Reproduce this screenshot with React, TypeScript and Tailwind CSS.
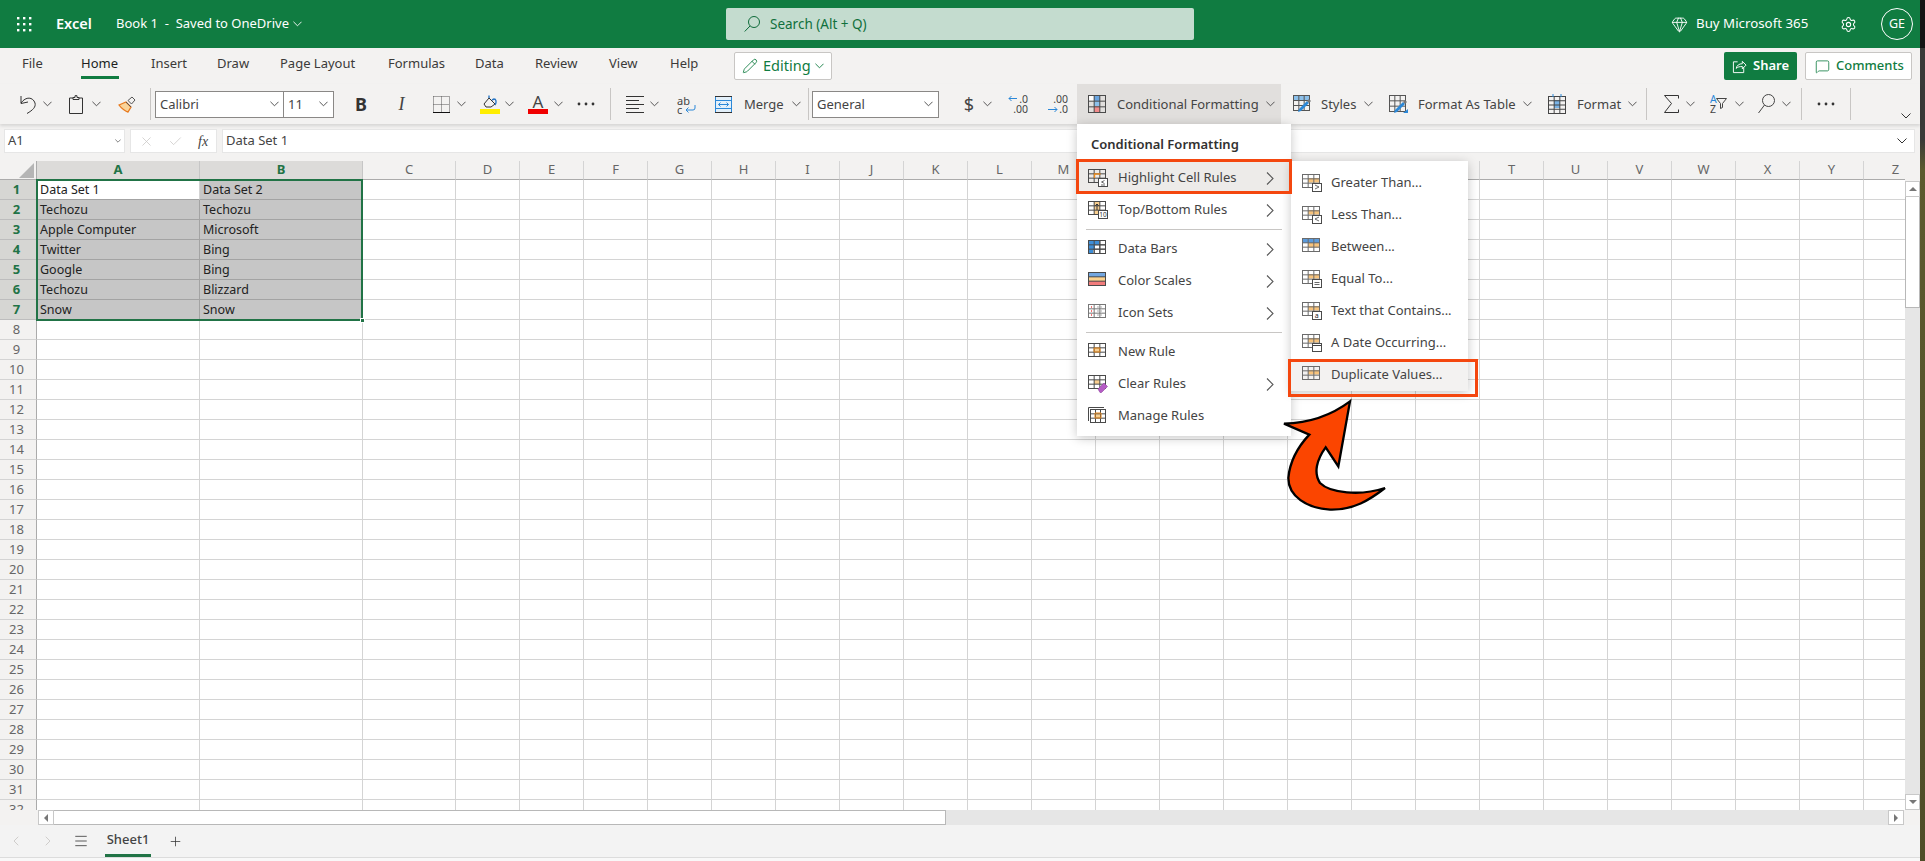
import { Gem, Pencil, Settings, MessageSquare, X, Check, Menu, Plus, ChevronLeft, ChevronRight } from 'lucide-react';
import type { ReactNode } from 'react';

const COLS = ['A','B','C','D','E','F','G','H','I','J','K','L','M','N','O','P','Q','R','S','T','U','V','W','X','Y','Z'];
const SHEET: Record<number, [string, string]> = {
  1: ['Data Set 1', 'Data Set 2'],
  2: ['Techozu', 'Techozu'],
  3: ['Apple Computer', 'Microsoft'],
  4: ['Twitter', 'Bing'],
  5: ['Google', 'Bing'],
  6: ['Techozu', 'Blizzard'],
  7: ['Snow', 'Snow'],
};
const ROWS = Array.from({ length: 32 }, (_, i) => i + 1);

function Chev({ className = '', color = '#444' }: { className?: string; color?: string }) {
  return (
    <svg viewBox="0 0 10 6" className={`w-[9px] h-[6px] shrink-0 ${className}`} fill="none" stroke={color} strokeWidth="1">
      <path d="M0.5 0.5 5 5l4.5-4.5" />
    </svg>
  );
}

function Sep({ className = '' }: { className?: string }) {
  return <div className={`w-px h-[32px] bg-[#c8c6c4] shrink-0 ${className}`} />;
}

function Dots({ className = '' }: { className?: string }) {
  return (
    <svg viewBox="0 0 18 4" className={`w-[18px] h-[4px] shrink-0 ${className}`} fill="#333">
      <circle cx="2" cy="2" r="1.4" /><circle cx="9" cy="2" r="1.4" /><circle cx="16" cy="2" r="1.4" />
    </svg>
  );
}

// small spreadsheet grid used by nearly all the format icons
function Tbl({ x = 0.5, y = 0.5, w = 17, h = 13, c = 3, r = 3, color = '#4a4a4a' }: { x?: number; y?: number; w?: number; h?: number; c?: number; r?: number; color?: string }) {
  const lines: ReactNode[] = [];
  for (let i = 1; i < c; i++) lines.push(<path key={`c${i}`} d={`M${x + (w * i) / c} ${y}v${h}`} />);
  for (let i = 1; i < r; i++) lines.push(<path key={`r${i}`} d={`M${x} ${y + (h * i) / r}h${w}`} />);
  return (
    <g fill="none" stroke={color} strokeWidth="1">
      <rect x={x} y={y} width={w} height={h} />
      {lines}
    </g>
  );
}

function Ico({ children, className = '' }: { children: ReactNode; className?: string }) {
  return <svg viewBox="0 0 20 18" className={`w-[20px] h-[18px] shrink-0 ${className}`}>{children}</svg>;
}

function SmallBox({ children }: { children?: ReactNode }) {
  return (
    <g>
      <rect x="10.5" y="9.5" width="9" height="8" fill="#fff" stroke="#4a4a4a" />
      {children}
    </g>
  );
}

const HighlightIcon = () => (
  <Ico><Tbl /><path d="M6.5 9V5h6" fill="none" stroke="#e8891c" strokeWidth="1.4" /><SmallBox><path d="M16.5 11.5l-3 1.5 3 1.5M13 16h4" fill="none" stroke="#444" strokeWidth=".8" /></SmallBox></Ico>
);
const TopBottomIcon = () => (
  <Ico><rect x="6" y="1" width="6" height="12" fill="#f9cf8f" /><Tbl /><path d="M9 9V3M7.3 4.7 9 3l1.7 1.7" fill="none" stroke="#333" /><SmallBox><text x="11.3" y="16" fontSize="6.5" fill="#333">10</text></SmallBox></Ico>
);
const DataBarsIcon = () => (
  <Ico><Tbl /><rect x="1" y="1" width="10" height="4" fill="#3f8fd8" /><rect x="1" y="5" width="6" height="4" fill="#3f8fd8" /><rect x="1" y="9" width="4" height="4" fill="#3f8fd8" /><Tbl /></Ico>
);
const ColorScalesIcon = () => (
  <Ico><rect x="1" y="1" width="16" height="4" fill="#74a7e0" /><rect x="1" y="5" width="16" height="4" fill="#fbd28f" /><rect x="1" y="9" width="16" height="4" fill="#f27c7c" /><Tbl c={1} /></Ico>
);
const IconSetsIcon = () => (
  <Ico><Tbl color="#777" /><path d="M3 3h1M3 7h1M3 11h1" stroke="#e44" strokeWidth="1.5" /><path d="M9 3h5M9 7h5M9 11h5" stroke="#aaa" /></Ico>
);
const NewRuleIcon = () => (
  <Ico><rect x="6" y="5" width="6" height="4" fill="#f9cf8f" /><Tbl /><path d="M6 5h6v4H6z" fill="none" stroke="#e8891c" /></Ico>
);
const ClearRulesIcon = () => (
  <Ico><rect x="6" y="5" width="6" height="4" fill="#f9cf8f" /><Tbl /><path d="M10 14l6-6 3.5 3.5-6 6H12z" fill="#b55cc4" stroke="#8d3f9e" strokeWidth=".6" /></Ico>
);
const ManageRulesIcon = () => (
  <Ico><rect x="7" y="6" width="6" height="5" fill="#f9cf8f" /><path d="M0.5 14V.5H16" fill="none" stroke="#4a4a4a" /><Tbl x={2.5} y={2.5} w={15} h={13} /><path d="M7 6h6v5H7z" fill="none" stroke="#e8891c" /></Ico>
);

function CondIcon({ symbol, blue = false }: { symbol?: ReactNode; blue?: boolean }) {
  return (
    <Ico>
      {blue && <rect x="1" y="1" width="16" height="4" fill="#5b9bdc" />}
      <rect x="6" y={blue ? 5 : 4} width="11" height="4.5" fill="#f7c37c" />
      <Tbl color="#6b6b6b" />
      {symbol && <SmallBox>{symbol}</SmallBox>}
    </Ico>
  );
}

const MainMenu: { label: string; icon: ReactNode; more?: boolean; sepAfter?: boolean; active?: boolean }[] = [
  { label: 'Highlight Cell Rules', icon: <HighlightIcon />, more: true, active: true },
  { label: 'Top/Bottom Rules', icon: <TopBottomIcon />, more: true, sepAfter: true },
  { label: 'Data Bars', icon: <DataBarsIcon />, more: true },
  { label: 'Color Scales', icon: <ColorScalesIcon />, more: true },
  { label: 'Icon Sets', icon: <IconSetsIcon />, more: true, sepAfter: true },
  { label: 'New Rule', icon: <NewRuleIcon /> },
  { label: 'Clear Rules', icon: <ClearRulesIcon />, more: true },
  { label: 'Manage Rules', icon: <ManageRulesIcon /> },
];

const SubMenu: { label: string; icon: ReactNode; hover?: boolean }[] = [
  { label: 'Greater Than...', icon: <CondIcon symbol={<path d="M13 11l4 2-4 2" fill="none" stroke="#444" strokeWidth=".8" />} /> },
  { label: 'Less Than...', icon: <CondIcon symbol={<path d="M17 11l-4 2 4 2" fill="none" stroke="#444" strokeWidth=".8" />} /> },
  { label: 'Between...', icon: <CondIcon blue /> },
  { label: 'Equal To...', icon: <CondIcon symbol={<path d="M12.5 12.5h5M12.5 14.5h5" stroke="#444" strokeWidth=".8" />} /> },
  { label: 'Text that Contains...', icon: <CondIcon symbol={<text x="12.7" y="16" fontSize="7" fill="#222">a</text>} /> },
  { label: 'A Date Occurring...', icon: <CondIcon symbol={<path d="M10.5 11.5h9" stroke="#444" />} /> },
  { label: 'Duplicate Values...', icon: <CondIcon />, hover: true },
];

function TopBar() {
  return (
    <div className="h-[48px] bg-[#107c41] flex items-center text-white shrink-0">
      <svg viewBox="0 0 16 16" className="w-[16px] h-[16px] ml-[16px] shrink-0" fill="#fff">
        {[1, 7, 13].map((y) => [1, 7, 13].map((x) => <rect key={`${x}${y}`} x={x} y={y} width="2.4" height="2.4" />))}
      </svg>
      <span className="ml-[24px] w-[36px] text-[14.5px] font-semibold">Excel</span>
      <span className="ml-[24px] w-[175px] text-[13px] whitespace-nowrap">Book 1&nbsp; -&nbsp; Saved to OneDrive</span>
      <Chev className="ml-[2px]" color="#fff" />
      <div className="ml-[424px] w-[468px] h-[32px] bg-[#c4dccf] rounded-[2px] flex items-center">
        <svg viewBox="0 0 16 16" className="w-[16px] h-[16px] ml-[18px] shrink-0" fill="none" stroke="#0f6b3a"><circle cx="10" cy="6" r="5.5" /><path d="M6 10 .7 15.5" /></svg>
        <span className="ml-[10px] text-[13.5px] text-[#10703c]">Search (Alt + Q)</span>
      </div>
      <Gem className="w-[17px] h-[17px] ml-[477px] shrink-0" strokeWidth={1.3} />
      <span className="ml-[8px] w-[111px] text-[13.3px] whitespace-nowrap">Buy Microsoft 365</span>
      <Settings className="w-[17px] h-[17px] ml-[33px] shrink-0" strokeWidth={1.5} />
      <div className="ml-[24px] w-[32px] h-[32px] rounded-full border border-white flex items-center justify-center text-[12.5px]">GE</div>
    </div>
  );
}

function TabsRow() {
  const tab = 'h-[24px] mt-[4px] flex items-center text-[13px] text-[#3b3a39] whitespace-nowrap shrink-0';
  return (
    <div className="h-[36px] bg-[#f3f2f1] flex items-start shrink-0">
      <span className={`${tab} ml-[22px] w-[22px]`}>File</span>
      <span className={`${tab} ml-[37px] w-[38px] !h-[27px] border-b-[3px] border-[#107c41] !text-[#201f1e]`}>Home</span>
      <span className={`${tab} ml-[32px] w-[34px]`}>Insert</span>
      <span className={`${tab} ml-[32px] w-[31px]`}>Draw</span>
      <span className={`${tab} ml-[32px] w-[75px]`}>Page Layout</span>
      <span className={`${tab} ml-[33px] w-[56px]`}>Formulas</span>
      <span className={`${tab} ml-[31px] w-[28px]`}>Data</span>
      <span className={`${tab} ml-[32px] w-[43px]`}>Review</span>
      <span className={`${tab} ml-[31px] w-[29px]`}>View</span>
      <span className={`${tab} ml-[32px] w-[29px]`}>Help</span>
      <div className="ml-[35px] mt-[4px] w-[98px] h-[28px] bg-white border border-[#c8c6c4] rounded-[2px] flex items-center text-[#107c41] text-[14.5px] shrink-0">
        <Pencil className="w-[16px] h-[16px] ml-[7px]" strokeWidth={1.3} />
        <span className="ml-[5px] w-[49px]">Editing</span>
        <Chev className="ml-[3px]" color="#107c41" />
      </div>
      <div className="ml-[892px] mt-[4px] w-[73px] h-[28px] bg-[#107c41] rounded-[2px] flex items-center text-white text-[13px] font-semibold shrink-0">
        <svg viewBox="0 0 16 16" className="w-[15px] h-[15px] ml-[8px]" fill="none" stroke="#fff" strokeWidth="1"><path d="M6 3H1.5v11.5h11V9" /><path d="M4.5 10c.5-3 3-5 6.5-5V2.5l4 4-4 4V8c-3 0-5 .5-6.5 2z" /></svg>
        <span className="ml-[6px]">Share</span>
      </div>
      <div className="ml-[8px] mt-[4px] w-[107px] h-[28px] bg-white border border-[#c8c6c4] rounded-[2px] flex items-center text-[#107c41] text-[13px] font-medium shrink-0">
        <MessageSquare className="w-[15px] h-[15px] ml-[9px]" strokeWidth={1.3} />
        <span className="ml-[6px]">Comments</span>
      </div>
    </div>
  );
}

function Toolbar() {
  const label = 'text-[13px] text-[#444] whitespace-nowrap shrink-0 pt-[2px]';
  return (
    <div className="h-[40px] bg-[#f3f2f1] flex items-center shrink-0 shadow-[0_2px_3px_rgba(0,0,0,0.12)] relative">
      <svg viewBox="0 0 17 19" className="w-[17px] h-[19px] ml-[20px] shrink-0" fill="none" stroke="#333"><path d="M1 1v7.5L8 7M1 8C6 1 13 2 15 8c1 4-2 7-8 10.5" /></svg>
      <Chev className="ml-[6px]" />
      <svg viewBox="0 0 14 19" className="w-[14px] h-[19px] ml-[17px] shrink-0" fill="none" stroke="#333"><path d="M4 3H.5v15.5h13V3H10" /><path d="M4 4.5V2.5h2V.7h2v1.8h2v2z" /></svg>
      <Chev className="ml-[9px]" />
      <svg viewBox="0 0 18 17" className="w-[18px] h-[17px] ml-[17px] shrink-0" fill="none"><path d="M1 9l7-3 5 5-3 5c-2-.5-7-4-9-7z" fill="#f9d49a" stroke="#e8791c" strokeWidth="1.3" /><path d="M8 6l5 5M10 4.5l3.5 3.5 3.5-4L14 1z" stroke="#555" /></svg>
      <Sep className="ml-[14px]" />
      <div className="ml-[4px] w-[129px] h-[27px] bg-white border border-[#8a8886] flex items-center shrink-0">
        <span className="ml-[4px] flex-1 text-[13px] text-[#444] pt-[1px]">Calibri</span>
        <Chev className="mr-[4px]" />
      </div>
      <div className="ml-[-1px] w-[51px] h-[27px] bg-white border border-[#8a8886] flex items-center shrink-0">
        <span className="ml-[4px] flex-1 text-[13px] text-[#444] pt-[1px]">11</span>
        <Chev className="mr-[5px]" />
      </div>
      <span className="ml-[21px] w-[12px] text-[18px] font-bold text-[#333] flex justify-center shrink-0">B</span>
      <span className="ml-[31px] w-[7px] text-[18px] italic text-[#444] font-['Liberation_Serif',serif] flex justify-center shrink-0">I</span>
      <svg viewBox="0 0 17 17" className="w-[17px] h-[17px] ml-[28px] shrink-0" fill="none" stroke="#555"><path d="M.5.5h16v16M.5.5v16M8.5.5v15M.5 8.5h16" strokeDasharray="1 1" /><path d="M0 16.5h17" stroke="#111" /></svg>
      <Chev className="ml-[7px]" />
      <svg viewBox="0 0 20 20" className="w-[20px] h-[20px] ml-[14px] shrink-0" fill="none"><path d="M4 10l5-6 6 6-4 3H6z" stroke="#333" /><path d="M9 4V1.5M15 11c2-3 1-6-1-6l-2 1" stroke="#2b78c5" strokeWidth="1.4" /><rect x="0" y="15" width="20" height="5" fill="#ffee00" /></svg>
      <Chev className="ml-[5px]" />
      <div className="ml-[14px] w-[20px] h-[20px] flex flex-col items-center shrink-0">
        <span className="text-[17px] leading-[15px] text-[#444]">A</span>
        <div className="w-[20px] h-[5px] bg-[#f00000]" />
      </div>
      <Chev className="ml-[6px]" />
      <Dots className="ml-[14px]" />
      <Sep className="ml-[15px]" />
      <svg viewBox="0 0 18 17" className="w-[18px] h-[17px] ml-[15px] shrink-0" stroke="#333"><path d="M0 .5h18M0 4.5h13M0 8.5h18M0 12.5h13M0 16.5h18" /></svg>
      <Chev className="ml-[6px]" />
      <div className="relative ml-[18px] w-[17px] h-[19px] flex flex-col text-[11px] leading-[9px] text-[#444] shrink-0 pt-[1px]">
        <span>ab</span>
        <span>c</span>
        <svg viewBox="0 0 11 9" className="absolute right-[-2px] bottom-[0px] w-[11px] h-[9px]" fill="none" stroke="#2b88d8"><path d="M10 0v3a2 2 0 0 1-2 2H1M3.5 2.5 1 5l2.5 2.5" /></svg>
      </div>
      <svg viewBox="0 0 17 17" className="w-[17px] h-[17px] ml-[21px] shrink-0" fill="none"><rect x=".5" y=".5" width="16" height="16" fill="#e3f0fa" stroke="#2b88d8" /><path d="M1 4.5h15M1 12.5h15" stroke="#2b88d8" /><path d="M0 .5h17M0 16.5h17" stroke="#333" /><path d="M3.5 8.5h10M5.5 6.5l-2 2 2 2M11.5 6.5l2 2-2 2" stroke="#2b88d8" /></svg>
      <span className={`${label} ml-[12px] w-[40px]`}>Merge</span>
      <Chev className="ml-[8px]" />
      <Sep className="ml-[7px]" />
      <div className="ml-[3px] w-[127px] h-[27px] bg-white border border-[#8a8886] flex items-center shrink-0">
        <span className="ml-[4px] flex-1 text-[13px] text-[#444] pt-[1px]">General</span>
        <Chev className="mr-[5px]" />
      </div>
      <span className="ml-[24px] w-[12px] text-[18px] text-[#444] flex justify-center shrink-0">$</span>
      <Chev className="ml-[8px]" />
      <div className="relative ml-[16px] w-[20px] h-[20px] flex flex-col items-end text-[10.5px] leading-[10px] text-[#444] shrink-0">
        <span>.0</span>
        <span>.00</span>
        <svg viewBox="0 0 9 7" className="absolute left-[0px] top-[1px] w-[9px] h-[7px]" fill="none" stroke="#2b88d8"><path d="M9 3.5H1M3.5 1 1 3.5 3.5 6" /></svg>
      </div>
      <div className="relative ml-[20px] w-[20px] h-[20px] flex flex-col items-end text-[10.5px] leading-[10px] text-[#444] shrink-0">
        <span>.00</span>
        <span>.0</span>
        <svg viewBox="0 0 10 7" className="absolute left-[0px] bottom-[1px] w-[10px] h-[7px]" fill="none" stroke="#2b88d8"><path d="M0 3.5h9M6.5 1 9 3.5 6.5 6" /></svg>
      </div>
      <div className="ml-[9px] w-[204px] h-[40px] bg-[#e1dfdd] flex items-center shrink-0">
        <svg viewBox="0 0 18 18" className="w-[18px] h-[18px] ml-[11px] shrink-0"><rect x="6" y="1" width="6" height="5" fill="#6aa5e0" /><rect x="6" y="6" width="6" height="5" fill="#8cc0ea" /><rect x="6" y="11" width="6" height="6" fill="#f28b8b" /><rect x="1" y="1" width="5" height="5" fill="#fff" /><Tbl x={.5} y={.5} w={17} h={17} /></svg>
        <span className={`${label} ml-[11px] w-[143px]`}>Conditional Formatting</span>
        <Chev className="ml-[6px]" />
      </div>
      <svg viewBox="0 0 19 19" className="w-[19px] h-[19px] ml-[12px] shrink-0"><rect x="1" y="1" width="15" height="5" fill="#8cc0ea" /><Tbl x={.5} y={.5} w={16} h={15} color="#555" /><path d="M5 17l3-1 8-8-2-2-8 8z" fill="#2b88d8" /><path d="M14 6l2-2 2 2-2 2z" fill="#777" /></svg>
      <span className={`${label} ml-[9px] w-[35px]`}>Styles</span>
      <Chev className="ml-[8px]" />
      <svg viewBox="0 0 19 19" className="w-[19px] h-[19px] ml-[16px] shrink-0"><Tbl x={.5} y={.5} w={16} h={16} color="#555" /><path d="M5 18l3-1 8-8-2-2-8 8z" fill="#2b88d8" /><path d="M14 7l2-2 2 2-2 2z" fill="#777" /><path d="M14 18h5v-4z" fill="#2b88d8" /></svg>
      <span className={`${label} ml-[10px] w-[98px]`}>Format As Table</span>
      <Chev className="ml-[7px]" />
      <svg viewBox="0 0 18 20" className="w-[18px] h-[20px] ml-[16px] shrink-0"><rect x="6" y="6" width="6" height="8" fill="#7ab3e6" /><Tbl x={.5} y={2.5} w={17} h={17} color="#444" c={3} r={4} /><path d="M5 0v3M13 0v3" stroke="#2b88d8" /></svg>
      <span className={`${label} ml-[11px] w-[44px]`}>Format</span>
      <Chev className="ml-[7px]" />
      <Sep className="ml-[9px]" />
      <svg viewBox="0 0 15 18" className="w-[15px] h-[18px] ml-[17px] shrink-0" fill="none" stroke="#333"><path d="M14.5 3.5V.5H.5l7 8-7 9h14v-3" /></svg>
      <Chev className="ml-[7px]" />
      <div className="relative ml-[15px] w-[17px] h-[20px] flex flex-col text-[10.5px] leading-[10px] shrink-0">
        <span className="text-[#2b88d8]">A</span>
        <span className="text-[#444]">Z</span>
        <svg viewBox="0 0 11 11" className="absolute right-[0px] top-[4px] w-[11px] h-[11px]" fill="none" stroke="#444"><path d="M.5.5h10l-4 5v4l-2 1V5.500z" /></svg>
      </div>
      <Chev className="ml-[8px]" />
      <svg viewBox="0 0 17 20" className="w-[17px] h-[20px] ml-[14px] shrink-0" fill="none" stroke="#444"><circle cx="10.5" cy="6.5" r="6" /><path d="M6.500 11 .5 19" /></svg>
      <Chev className="ml-[7px]" />
      <Sep className="ml-[10px]" />
      <Dots className="ml-[15px]" />
      <Sep className="ml-[15px]" />
      <Chev className="ml-[50px] self-end mb-[5px] !w-[10px]" color="#333" />
    </div>
  );
}

function FormulaBar() {
  return (
    <div className="h-[37px] bg-[#f3f2f1] flex items-start pt-[5px] shrink-0">
      <div className="ml-[4px] w-[121px] h-[24px] bg-white border border-[#e6e6e6] flex items-center shrink-0">
        <span className="ml-[3px] flex-1 text-[13px] text-[#444]">A1</span>
        <Chev className="mr-[3px] !w-[6px]" color="#333" />
      </div>
      <div className="ml-[5px] w-[87px] h-[24px] bg-white border border-[#e6e6e6] flex items-center shrink-0">
        <X className="w-[15px] h-[15px] ml-[8px] text-[#c8c6c4]" strokeWidth={1.2} />
        <Check className="w-[15px] h-[15px] ml-[14px] text-[#c8c6c4]" strokeWidth={1.2} />
        <span className="ml-[15px] text-[14px] italic text-[#444] font-['Liberation_Serif',serif]">fx</span>
      </div>
      <div className="ml-[5px] w-[1693px] h-[24px] bg-white border border-[#e6e6e6] flex items-center shrink-0">
        <span className="ml-[3px] flex-1 text-[13px] text-[#444]">Data Set 1</span>
        <Chev className="mr-[7px] !w-[10px]" color="#333" />
      </div>
    </div>
  );
}

function Grid() {
  return (
    <div className="relative w-[1905px] h-[649px] overflow-hidden shrink-0">
      <div className="grid grid-cols-[37px_163px_163px_93px_repeat(23,64px)] grid-rows-[19px_repeat(32,20px)]">
        <div className="bg-[#f3f2f1] border-b border-r border-[#ababab] relative">
          <svg viewBox="0 0 15 15" className="absolute right-[2px] bottom-[1px] w-[15px] h-[15px]"><path d="M15 0v15H0z" fill="#b5b5b5" /></svg>
        </div>
        {COLS.map((c, i) => (
          <div key={c} className={`border-b border-[#ababab] flex items-center justify-center text-[13px] border-r ${i < 2 ? 'bg-[#dcdbd9] text-[#217346] font-bold border-r-[#c6c6c6]' : 'bg-[#f3f2f1] text-[#666] border-r-[#d4d4d4]'}`}>{c}</div>
        ))}
        {ROWS.map((r) => {
          const data = SHEET[r];
          return [
            <div key={`h${r}`} className={`border-b border-r flex items-center justify-center text-[13px] pr-[3px] pt-[1px] border-r-[#ababab] ${data ? 'bg-[#d6d6d3] text-[#217346] font-bold border-b-[#bdbdbd]' : 'bg-[#f3f2f1] text-[#666] border-b-[#d4d4d4]'}`}>{r}</div>,
            ...COLS.map((c, i) => {
              const text = data && i < 2 ? data[i] : '';
              const selected = data && i < 2 && !(r === 1 && i === 0);
              return (
                <div key={`${c}${r}`} className={`border-b border-r flex items-center pl-[3px] pt-[1px] text-[12.5px] text-[#222] whitespace-nowrap ${selected ? 'bg-[#c6c6c6] border-[#a3a3a3]' : 'bg-white border-[#d4d4d4]'} ${data && i < 2 && r === 1 && i === 0 ? 'border-b-[#a3a3a3]' : ''}`}>{text}</div>
              );
            }),
          ];
        })}
      </div>
      {/* selection outline */}
      <div className="absolute left-[36px] top-[18px] w-[327px] h-[142px] border-2 border-[#217346]" />
      <div className="absolute left-[360px] top-[157px] w-[5px] h-[5px] bg-[#217346] border border-white" />
    </div>
  );
}

function VScroll() {
  return (
    <div className="w-[15px] h-[649px] bg-[#f3f2f1] flex flex-col shrink-0 pt-[20px]">
      <div className="h-[16px] bg-white border border-[#c8c8c8] flex items-center justify-center shrink-0">
        <div className="w-0 h-0 border-x-[4px] border-x-transparent border-b-[4px] border-b-[#777]" />
      </div>
      <div className="h-[111px] bg-white border-x border-b border-[#b8b8b8] shrink-0" />
      <div className="flex-1 bg-[#e6e6e6]" />
      <div className="h-[16px] bg-white border border-[#c8c8c8] flex items-center justify-center shrink-0">
        <div className="w-0 h-0 border-x-[4px] border-x-transparent border-t-[4px] border-t-[#777]" />
      </div>
    </div>
  );
}

function HScroll() {
  return (
    <div className="h-[15px] bg-[#f3f2f1] flex shrink-0">
      <div className="ml-[38px] w-[16px] bg-white border border-[#c8c8c8] flex items-center justify-center shrink-0">
        <div className="w-0 h-0 border-y-[4px] border-y-transparent border-r-[4px] border-r-[#777]" />
      </div>
      <div className="w-[892px] bg-white border-y border-r border-[#b8b8b8] shrink-0" />
      <div className="w-[942px] bg-[#e6e6e6] shrink-0" />
      <div className="w-[16px] bg-white border border-[#c8c8c8] flex items-center justify-center shrink-0">
        <div className="w-0 h-0 border-y-[4px] border-y-transparent border-l-[4px] border-l-[#777]" />
      </div>
    </div>
  );
}

function SheetBar() {
  return (
    <div className="h-[32px] bg-[#f3f3f3] border-none flex items-center shrink-0">
      <ChevronLeft className="w-[16px] h-[16px] ml-[8px] text-[#c8c6c4]" strokeWidth={1.3} />
      <ChevronRight className="w-[16px] h-[16px] ml-[16px] text-[#c8c6c4]" strokeWidth={1.3} />
      <Menu className="w-[16px] h-[16px] ml-[17px] text-[#333]" strokeWidth={1.2} />
      <div className="ml-[16px] w-[46px] h-[32px] border-b-[3px] border-[#217346] flex items-center justify-center text-[13px] font-medium text-[#444]">Sheet1</div>
      <Plus className="w-[15px] h-[15px] ml-[17px] text-[#333]" strokeWidth={1.2} />
    </div>
  );
}

function MenuRow({ label, icon, more, active }: { label: string; icon: ReactNode; more?: boolean; active?: boolean }) {
  return (
    <div className={`h-[32px] flex items-center pl-[11px] text-[13px] text-[#444] ${active ? 'bg-[#edebe9]' : ''}`}>
      {icon}
      <span className="ml-[10px] flex-1 whitespace-nowrap">{label}</span>
      {more && (
        <svg viewBox="0 0 8 13" className="w-[8px] h-[13px] mr-[17px] shrink-0" fill="none" stroke="#555" strokeWidth="1.1"><path d="M1 .5 7 6.500 1 12.500" /></svg>
      )}
    </div>
  );
}

function Dropdowns() {
  return (
    <>
      <div className="absolute left-[1077px] top-[124px] w-[214px] bg-white shadow-[0_2px_10px_rgba(0,0,0,0.22)] pb-[4px]">
        <div className="h-[38px] pt-[4px] pl-[14px] flex items-center text-[13px] font-semibold text-[#323130]">Conditional Formatting</div>
        {MainMenu.map((m) => (
          <div key={m.label}>
            <MenuRow label={m.label} icon={m.icon} more={m.more} active={m.active} />
            {m.sepAfter && <div className="h-[7px] flex items-center px-[9px]"><div className="h-px w-full bg-[#c8c6c4]" /></div>}
          </div>
        ))}
      </div>
      <div className="absolute left-[1291px] top-[161px] w-[177px] bg-white shadow-[0_2px_10px_rgba(0,0,0,0.22)] pt-[6px]">
        {SubMenu.map((m) => (
          <div key={m.label} className={`h-[32px] flex items-center pl-[11px] text-[13px] text-[#444] ${m.hover ? 'bg-[#f3f2f1]' : ''}`}>
            {m.icon}
            <span className="ml-[9px] whitespace-nowrap">{m.label}</span>
          </div>
        ))}
      </div>
      <div className="absolute left-[1076px] top-[159px] w-[216px] h-[35px] border-[3px] border-[#f4470f]" />
      <div className="absolute left-[1288px] top-[359px] w-[190px] h-[38px] border-[3px] border-[#f4470f]" />
      <svg viewBox="660 235 330 345" className="absolute left-[1280px] top-[398px] w-[110px] h-[115px]">
        <path
          d="M870 245 L835 440 L797 383 C770 420 760 460 780 490 C810 520 900 530 975 505 C930 540 880 572 810 570 C740 565 685 530 685 475 C690 420 715 380 748 345 L672 312 C740 310 810 290 870 245 Z"
          fill="#fb4500"
          stroke="#000"
          strokeWidth="7"
          strokeLinejoin="miter"
        />
      </svg>
    </>
  );
}

export default function App() {
  return (
    <div className="relative w-[1925px] h-[861px] flex overflow-hidden font-['Noto_Sans',sans-serif] bg-[#f3f2f1]">
      <div className="w-[1920px] flex flex-col shrink-0">
        <TopBar />
        <TabsRow />
        <Toolbar />
        <FormulaBar />
        <div className="flex shrink-0">
          <Grid />
          <VScroll />
        </div>
        <HScroll />
        <SheetBar />
        <div className="h-[4px] bg-[#f8f8f8] border-t border-[#dcdcdc]" />
      </div>
      <div className="w-[5px] h-full bg-[linear-gradient(to_bottom,#141414_0,#141414_48px,#3a3a38_48px,#3a3a38_140px,#5c5a2e_170px,#4f4d28_100%)]" />
      <Dropdowns />
    </div>
  );
}
